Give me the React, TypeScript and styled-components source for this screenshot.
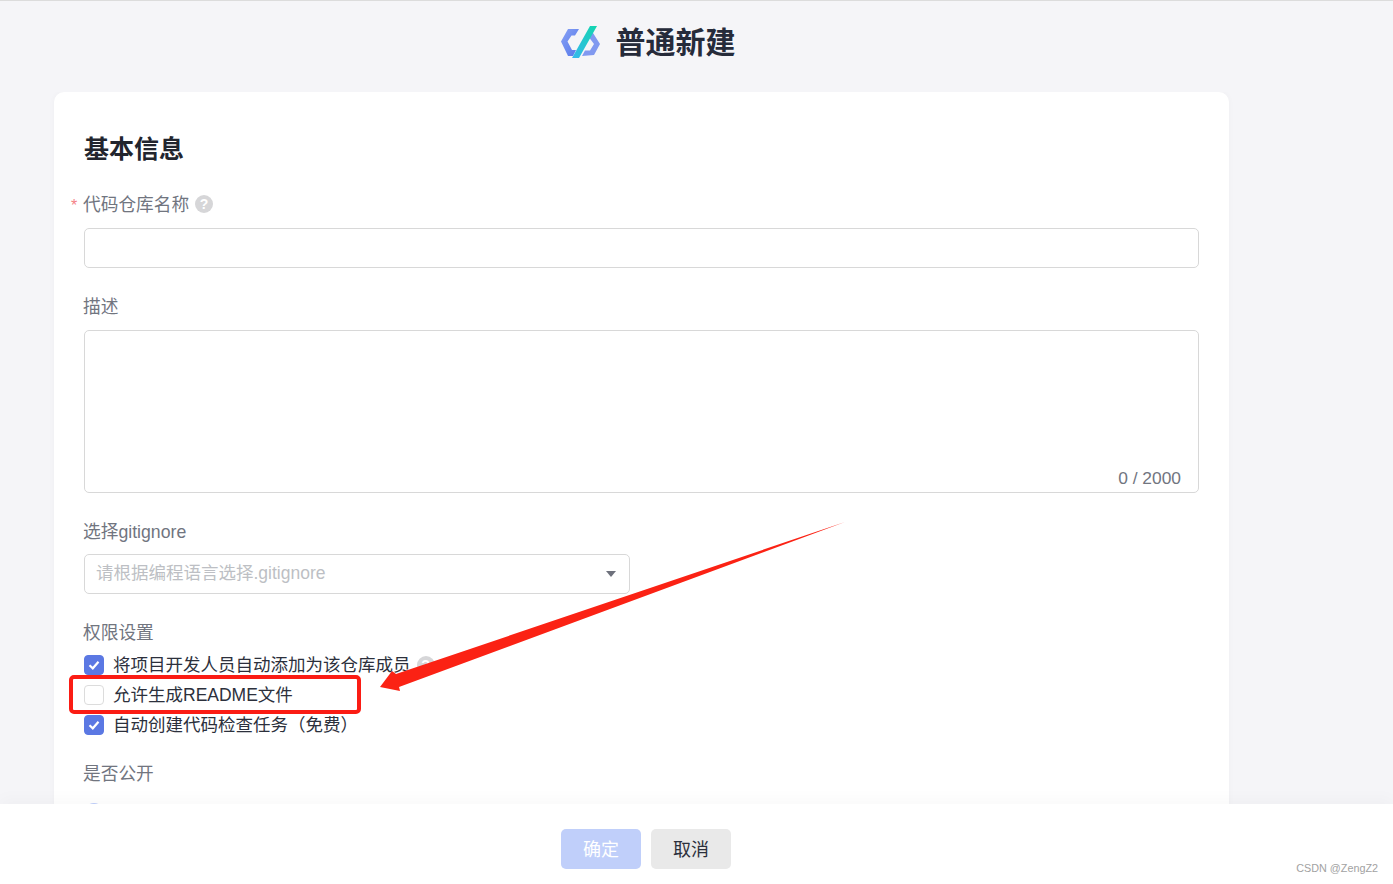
import React from "react";
import styled, { createGlobalStyle } from "styled-components";

const FONT = `"Liberation Sans", "Noto Sans CJK SC", sans-serif`;

const Global = createGlobalStyle`
  html, body { margin: 0; padding: 0; height: 100%; }
  body { font-family: ${FONT}; background: #f5f5f8; }
  * { box-sizing: border-box; }
`;

const Page = styled.div`
  position: relative;
  width: 1393px;
  height: 884px;
  overflow: hidden;
  display: flex;
  flex-direction: column;
  background: #f5f5f8;
  border-top: 1px solid #dcdcdc;
`;

const Header = styled.header`
  flex: none;
  height: 91px;
  padding: 0 97px 8px 0;
  display: flex;
  align-items: center;
  justify-content: center;
  gap: 15px;
`;

const PageTitle = styled.h1`
  margin: 0;
  font-size: 30px;
  line-height: 40px;
  font-weight: 700;
  color: #262b3a;
`;

const Main = styled.main`
  flex: 1;
  min-height: 0;
  overflow: hidden;
  padding-left: 54px;
`;

const Card = styled.section`
  width: 1175px;
  padding: 39px 30px 30px;
  background: #fff;
  border-radius: 10px;
  box-shadow: 0 0 6px rgba(30, 40, 70, 0.03);
`;

const CardTitle = styled.h2`
  margin: 0 0 25px;
  font-size: 25px;
  line-height: 36px;
  font-weight: 700;
  color: #22252e;
`;

const Field = styled.div<{ $gap?: number }>`
  margin-bottom: ${(p) => p.$gap ?? 26}px;
`;

const Label = styled.div<{ $gap?: number }>`
  display: flex;
  align-items: center;
  height: 24px;
  padding-bottom: 3px;
  margin-bottom: ${(p) => p.$gap ?? 12}px;
  margin-left: -1px;
  font-size: 17.7px;
  color: #71757f;
`;

const Star = styled.span`
  width: 12px;
  margin-left: -12px;
  padding-top: 6px;
  font-size: 16px;
  color: #f47f86;
  font-family: "Liberation Sans", sans-serif;
`;

const Help = styled.span`
  flex: none;
  width: 18px;
  height: 18px;
  margin-left: 6px;
  margin-top: 3px;
  border-radius: 50%;
  background: #d6d6d8;
  color: #fff;
  font-size: 14px;
  font-weight: 700;
  line-height: 18px;
  text-align: center;
`;

const TextInput = styled.input`
  display: block;
  width: 100%;
  height: 40px;
  background: #fff;
  border: 1px solid #d8d8d8;
  border-radius: 5px;
  outline: none;
`;

const AreaWrap = styled.div`
  position: relative;
  height: 163px;
`;

const Area = styled.textarea`
  display: block;
  width: 100%;
  height: 100%;
  resize: none;
  background: #fff;
  border: 1px solid #d8d8d8;
  border-radius: 5px;
  outline: none;
`;

const Counter = styled.span`
  position: absolute;
  right: 18px;
  bottom: 4px;
  font-size: 17.4px;
  line-height: 22px;
  color: #71757f;
`;

const Select = styled.div`
  width: 546px;
  height: 40px;
  padding: 0 13px 0 11px;
  display: flex;
  align-items: center;
  justify-content: space-between;
  border: 1px solid #d8d8d8;
  border-radius: 5px;
  background: #fff;
`;

const Placeholder = styled.span`
  padding-bottom: 5px;
  font-size: 17.5px;
  color: #bdbfc4;
`;

const Caret = styled.span`
  width: 0;
  height: 0;
  border-left: 5.5px solid transparent;
  border-right: 5.5px solid transparent;
  border-top: 6px solid #6e717c;
`;

const CheckRow = styled.div`
  display: flex;
  align-items: center;
  height: 30px;
  padding-bottom: 4px;
  font-size: 17.5px;
  color: #2c303c;
`;

const Box = styled.span<{ $on?: boolean }>`
  flex: none;
  width: 20px;
  height: 20px;
  margin-top: 4px;
  margin-right: 9px;
  display: flex;
  align-items: center;
  justify-content: center;
  border-radius: 4px;
  background: ${(p) => (p.$on ? "#5b78e3" : "#fff")};
  border: 1px solid ${(p) => (p.$on ? "#5b78e3" : "#dcdcdc")};
`;

const RadioDot = styled.span`
  display: block;
  width: 20px;
  height: 20px;
  margin-top: 18px;
  border-radius: 50%;
  background: #c0cffa;
`;

const Footer = styled.footer`
  position: relative;
  flex: none;
  height: 80px;
  padding: 10px 102px 0 0;
  display: flex;
  align-items: center;
  justify-content: center;
  gap: 10px;
  background: #fff;
  box-shadow: 0 -6px 14px rgba(0, 0, 0, 0.025);
`;

const Button = styled.button<{ $primary?: boolean }>`
  width: 80px;
  height: 40px;
  padding: 0 0 3px 1px;
  border: none;
  border-radius: 5px;
  font-family: ${FONT};
  font-size: 18px;
  background: ${(p) => (p.$primary ? "#c0cffa" : "#e9e9e9")};
  color: ${(p) => (p.$primary ? "#fff" : "#2c303c")};
`;

const Watermark = styled.span`
  position: absolute;
  right: 15px;
  bottom: 9px;
  font-size: 10.8px;
  line-height: 14px;
  color: #a2a2a2;
`;

const Highlight = styled.div`
  position: absolute;
  left: 69px;
  top: 674px;
  width: 292px;
  height: 39px;
  border: 4px solid #fb1c14;
  border-radius: 5px;
`;

const ArrowLayer = styled.svg`
  position: absolute;
  left: 0;
  top: -1px;
  pointer-events: none;
`;

const Logo = () => (
  <svg width="40" height="34" viewBox="0 0 40 34" aria-hidden="true">
    <defs>
      <linearGradient id="lg" x1="0" y1="0" x2="1" y2="1">
        <stop offset="0" stopColor="#88a2f5" />
        <stop offset="1" stopColor="#5577ea" />
      </linearGradient>
      <linearGradient id="sl" x1="1" y1="0" x2="0" y2="1">
        <stop offset="0" stopColor="#12d6ae" />
        <stop offset="1" stopColor="#38b8ee" />
      </linearGradient>
    </defs>
    <path d="M7 3 L18 3 L14 9.5 L10.5 9.5 L6.5 15.5 L11 24 L15 24 L12 30 L7 30 L0 15.5 Z" fill="url(#lg)" />
    <path d="M27 7 L32 7 L39 18 L33 29 L21 30 L24 24.5 L29 24.5 L33 18 L27 10 Z" fill="#8199f0" />
    <path d="M29 0 L36 0 L18 32 L11 32 Z" fill="url(#sl)" />
  </svg>
);

const Tick = () => (
  <svg width="14" height="14" viewBox="0 0 14 14" aria-hidden="true">
    <path d="M2.5 7.2 L5.8 10.3 L11.5 3.8" fill="none" stroke="#fff" strokeWidth="2.2" />
  </svg>
);

export default function App() {
  return (
    <Page>
      <Global />
      <Header>
        <Logo />
        <PageTitle>普通新建</PageTitle>
      </Header>
      <Main>
        <Card>
          <CardTitle>基本信息</CardTitle>
          <Field>
            <Label>
              <Star>*</Star>代码仓库名称<Help>?</Help>
            </Label>
            <TextInput />
          </Field>
          <Field>
            <Label>描述</Label>
            <AreaWrap>
              <Area />
              <Counter>0 / 2000</Counter>
            </AreaWrap>
          </Field>
          <Field>
            <Label $gap={11}>选择gitignore</Label>
            <Select>
              <Placeholder>请根据编程语言选择.gitignore</Placeholder>
              <Caret />
            </Select>
          </Field>
          <Field $gap={21}>
            <Label $gap={6}>权限设置</Label>
            <CheckRow>
              <Box $on><Tick /></Box>将项目开发人员自动添加为该仓库成员<Help>?</Help>
            </CheckRow>
            <CheckRow>
              <Box />允许生成README文件
            </CheckRow>
            <CheckRow>
              <Box $on><Tick /></Box>自动创建代码检查任务（免费）
            </CheckRow>
          </Field>
          <Field>
            <Label>是否公开</Label>
            <RadioDot />
          </Field>
        </Card>
      </Main>
      <Footer>
        <Button $primary>确定</Button>
        <Button>取消</Button>
        <Watermark>CSDN @ZengZ2</Watermark>
      </Footer>
      <Highlight />
      <ArrowLayer width="1393" height="884" aria-hidden="true">
        <polygon points="845,522 396,674 392,671 380,687 400,691 399,687" fill="#fb2214" />
      </ArrowLayer>
    </Page>
  );
}
